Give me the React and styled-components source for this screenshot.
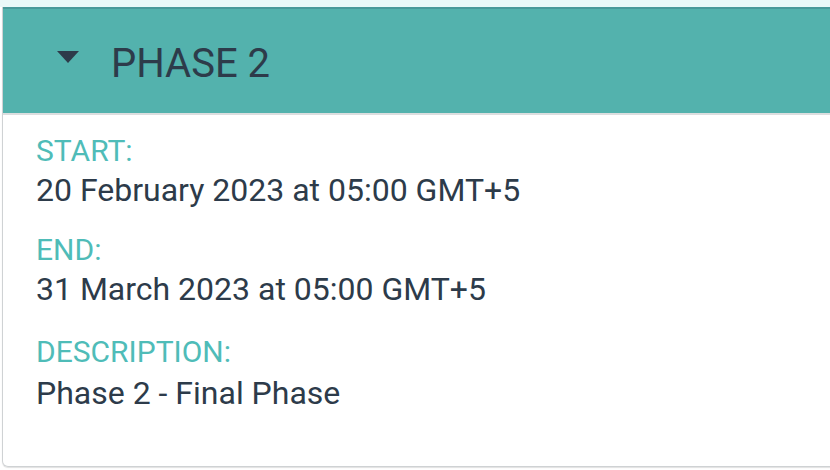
import styled, { createGlobalStyle } from 'styled-components';

const GlobalStyle = createGlobalStyle`
  html, body {
    margin: 0;
    padding: 0;
    background: #ffffff;
    font-family: Roboto, "Liberation Sans", sans-serif;
  }
`;

const Page = styled.div`
  width: 830px;
  height: 470px;
  overflow: hidden;
  background: #ffffff;
`;

const TopStrip = styled.div`
  height: 7px;
  background: #e9f8f8;
`;

const Card = styled.div`
  margin-left: 2px;
  width: 860px;
  height: 460px;
  box-sizing: border-box;
  border: 1px solid #cfd2d4;
  border-top: none;
  border-radius: 0 0 6px 6px;
  box-shadow: 0 1px 1px rgba(0, 0, 0, 0.12);
  overflow: hidden;
  display: flex;
  flex-direction: column;
`;

const Header = styled.div`
  height: 104px;
  background: #53b2ad;
  border-top: 2px solid #48999a;
  border-bottom: 2px solid #dcdedf;
  display: flex;
  align-items: center;
  padding-left: 54px;
  gap: 32px;
`;

const Caret = styled.span`
  width: 0;
  height: 0;
  border-left: 11px solid transparent;
  border-right: 11px solid transparent;
  border-top: 12px solid #2d3b4a;
  margin-top: -8px;
`;

const Title = styled.h2`
  margin: 0;
  padding-top: 5px;
  font-size: 40px;
  font-weight: 400;
  color: #2d3b4a;
`;

const Body = styled.div`
  padding: 18px 0 0 33px;
  display: flex;
  flex-direction: column;
  gap: 21px;
`;

const Field = styled.div`
  display: flex;
  flex-direction: column;
  margin-top: ${(p) => (p.$loose ? '3px' : '0')};
`;

const Label = styled.div`
  font-size: 30px;
  line-height: 36px;
  color: #4fbcb8;
`;

const Value = styled.div`
  font-size: 32px;
  line-height: ${(p) => (p.$loose ? '46px' : '42px')};
  color: #2d3b4a;
`;

const fields = [
  { label: 'START:', value: '20 February 2023 at 05:00 GMT+5' },
  { label: 'END:', value: '31 March 2023 at 05:00 GMT+5' },
  { label: 'DESCRIPTION:', value: 'Phase 2 - Final Phase', loose: true },
];

export default function App() {
  return (
    <Page>
      <GlobalStyle />
      <TopStrip />
      <Card>
        <Header>
          <Caret />
          <Title>PHASE 2</Title>
        </Header>
        <Body>
          {fields.map((f) => (
            <Field key={f.label} $loose={f.loose}>
              <Label>{f.label}</Label>
              <Value $loose={f.loose}>{f.value}</Value>
            </Field>
          ))}
        </Body>
      </Card>
    </Page>
  );
}
